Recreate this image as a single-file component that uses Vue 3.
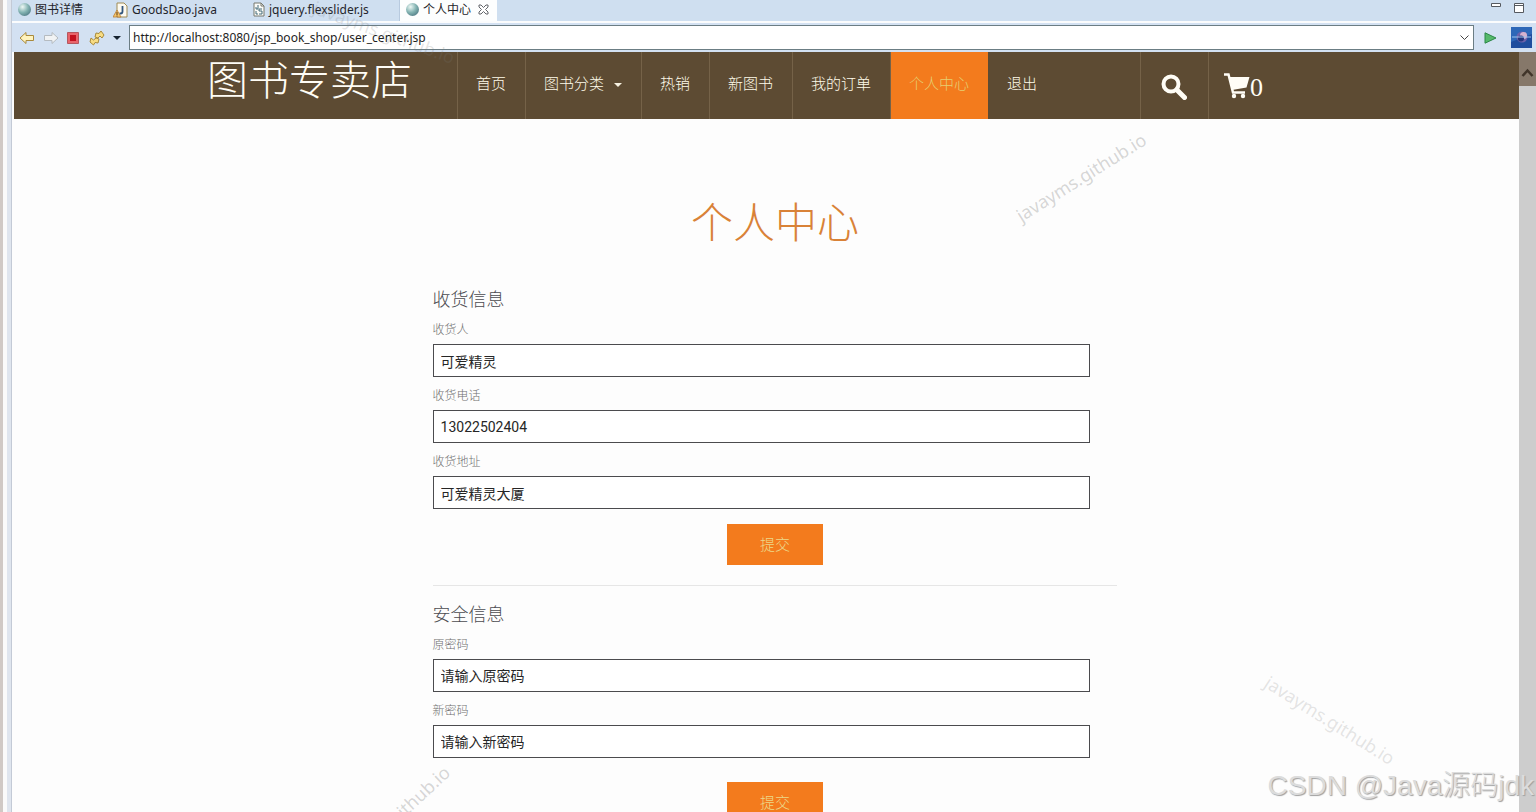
<template>
  <div class="workbench">
    <div class="gutter" aria-hidden="true"></div>

    <div class="editor">
      <nav class="tabs" aria-label="编辑器标签">
        <button
          v-for="tab in tabs"
          :key="tab.label"
          type="button"
          class="tab"
          :class="[tab.kind, { active: tab.label === activeTab }]"
          @click="activeTab = tab.label"
        >
          <span v-if="tab.icon === 'globe'" class="globe"></span>
          <svg v-else-if="tab.icon === 'java'" width="15" height="16" viewBox="0 0 15 16">
            <path d="M4 1h7l3 3v11H4z" fill="#fdfaf0" stroke="#a08b55" />
            <path d="M9.500 4v5.500q0 2-2 2H6.500" fill="none" stroke="#31557c" stroke-width="1.800" />
            <path d="M4 8l4 7H0z" fill="#f5c76b" stroke="#b97b35" stroke-width=".8" />
            <path d="M4 10v3M4 13.500v1" stroke="#5c3815" />
          </svg>
          <svg v-else width="12" height="15" viewBox="0 0 12 15">
            <path d="M1 1h7l3 3v10H1z" fill="#fbfbf7" stroke="#77796f" />
            <path d="M8 1v3h3" fill="none" stroke="#77796f" />
            <path d="M5 3v4H3V5M9 7H6v2h3v3H6M3 9v3h2" fill="none" stroke="#426b78" />
          </svg>
          <span>{{ tab.label }}</span>
          <svg v-if="tab.label === activeTab" class="close" width="11" height="11" viewBox="0 0 11 11">
            <path
              d="M1 1h2l2.500 2.500L8 1h2v2L7.500 5.500 10 8v2H8L5.500 7.500 3 10H1V8l2.500-2.500L1 3z"
              fill="#fff"
              stroke="#62656a"
            />
          </svg>
        </button>
        <div class="window-buttons">
          <button type="button" aria-label="最小化">
            <svg width="12" height="12" viewBox="0 0 12 12">
              <path d="M1.500 1.500h9v3h-9z" fill="#fff" stroke="#55595f" />
            </svg>
          </button>
          <button type="button" aria-label="最大化">
            <svg width="12" height="12" viewBox="0 0 12 12">
              <path d="M1.500 1.500h9v9h-9zM1 3.500h10" fill="#fff" stroke="#55595f" />
            </svg>
          </button>
        </div>
      </nav>

      <div class="toolbar">
        <button type="button" aria-label="后退">
          <svg width="16" height="14" viewBox="0 0 16 14">
            <path d="M1 7l6-5.500V4.500h7.500v5H7v3z" fill="#fff3bd" stroke="#a98a3c" stroke-linejoin="round" />
          </svg>
        </button>
        <button type="button" aria-label="前进">
          <svg width="16" height="14" viewBox="0 0 16 14">
            <path d="M15 7L9 1.500V4.500H1.500v5H9v3z" fill="#f1f3f4" stroke="#b5bbc0" stroke-linejoin="round" />
          </svg>
        </button>
        <button type="button" aria-label="停止">
          <svg width="12" height="12" viewBox="0 0 12 12">
            <path d="M.5.5h11v11H.5z" fill="#e9646b" stroke="#b5575f" />
            <path d="M3 3h6v6H3z" fill="#c3101e" />
          </svg>
        </button>
        <button type="button" class="refresh" aria-label="刷新">
          <svg width="16" height="16" viewBox="0 0 16 16">
            <path
              d="M6 7l1-4 3 .5L12 1l3 4-2 3-2-2-2 2z"
              fill="#f8dd83"
              stroke="#a98a3c"
              stroke-linejoin="round"
            />
            <path
              d="M10 9l-1 4-3-.5L4.500 15 1 12l1-4 2.500 2L7 8z"
              fill="#f8dd83"
              stroke="#a98a3c"
              stroke-linejoin="round"
            />
          </svg>
        </button>
        <button type="button" aria-label="更多">
          <svg width="8" height="4" viewBox="0 0 8 4"><path d="M0 0h8L4 4z" fill="#172331" /></svg>
        </button>
        <div class="address">
          <input v-model="url" type="text" aria-label="地址" />
          <button type="button" aria-label="历史地址">
            <svg width="9" height="6" viewBox="0 0 9 6">
              <path d="M.5.5l4 4 4-4" fill="none" stroke="#444" />
            </svg>
          </button>
        </div>
        <button type="button" class="go" aria-label="转到">
          <svg width="13" height="12" viewBox="0 0 13 12">
            <path d="M1 .800L12 6 1 11.200z" fill="#55b96b" stroke="#2b8747" />
          </svg>
        </button>
        <button type="button" aria-label="浏览器">
          <svg width="21" height="21" viewBox="0 0 21 21">
            <path d="M0 0h21v21H0z" fill="#1f4d9e" />
            <path d="M0 0h21v7L0 15z" fill="#2e68b8" />
            <circle cx="11" cy="10" r="5.500" fill="#6c62ac" />
            <circle cx="12.500" cy="8.500" r="3.500" fill="#d5b3cf" />
            <circle cx="10" cy="11.500" r="3" fill="#24357c" />
            <path d="M1 10h19" stroke="#9cc3ee" />
          </svg>
        </button>
      </div>

      <div class="page">
        <header class="site-header">
          <div class="container header-inner">
            <a class="brand" href="#">图书专卖店</a>
            <nav class="menu" aria-label="主导航">
              <a
                v-for="item in menu"
                :key="item.label"
                href="#"
                :class="{ current: item.current }"
              >{{ item.label }}<span v-if="item.dropdown" class="caret"></span></a>
            </nav>
            <a class="tool search" href="#" aria-label="搜索">
              <svg width="26" height="26" viewBox="0 0 26 26">
                <circle cx="10" cy="10" r="7.500" fill="none" stroke="#fffdf6" stroke-width="4" />
                <path d="M16 16l7.500 7.500" stroke="#fffdf6" stroke-width="5" stroke-linecap="round" />
              </svg>
            </a>
            <a class="tool cart" href="#" aria-label="购物车">
              <svg width="26" height="26" viewBox="0 0 26 26">
                <path d="M0 1.500h4.500L9 19.500h12" fill="none" stroke="#fffdf6" stroke-width="2.500" />
                <path d="M5 4h20.500l-3 10.500L8 17z" fill="#fffdf6" />
                <circle cx="10" cy="23" r="2.200" fill="#fffdf6" />
                <circle cx="19" cy="23" r="2.200" fill="#fffdf6" />
              </svg>
              <span>{{ cartCount }}</span>
            </a>
          </div>
        </header>

        <main class="account">
          <h1>个人中心</h1>
          <form v-for="group in groups" :key="group.title" :class="group.name" @submit.prevent>
            <h2>{{ group.title }}</h2>
            <div v-for="field in group.fields" :key="field.id" class="field">
              <label :for="field.id">{{ field.label }}</label>
              <input :id="field.id" v-model="field.value" type="text" :placeholder="field.placeholder" />
            </div>
            <button type="submit" class="submit">提交</button>
          </form>
        </main>

        <div class="scrollbar" aria-hidden="true">
          <div class="scroll-up">
            <svg width="13" height="10" viewBox="0 0 13 10">
              <path d="M1.500 8l5-5.500 5 5.500" fill="none" stroke="#41352a" stroke-width="2.500" />
            </svg>
          </div>
          <div class="scroll-thumb"></div>
        </div>
      </div>
    </div>

    <div class="marks" aria-hidden="true">
      <span class="mark mark-top">javayms.github.io</span>
      <span class="mark mark-right">javayms.github.io</span>
      <span class="mark mark-left">javayms.github.io</span>
      <span class="mark mark-bottom">javayms.github.io</span>
      <span class="credit">CSDN @Java源码jdk</span>
    </div>
  </div>
</template>

<script setup>
import { ref } from 'vue'

const tabs = [
  { label: '图书详情', icon: 'globe', kind: 'detail' },
  { label: 'GoodsDao.java', icon: 'java', kind: 'java' },
  { label: 'jquery.flexslider.js', icon: 'script', kind: 'script' },
  { label: '个人中心', icon: 'globe', kind: 'center' }
]

const activeTab = ref('个人中心')
const url = ref('http://localhost:8080/jsp_book_shop/user_center.jsp')
const cartCount = ref(0)

const menu = [
  { label: '首页' },
  { label: '图书分类', dropdown: true },
  { label: '热销' },
  { label: '新图书' },
  { label: '我的订单' },
  { label: '个人中心', current: true },
  { label: '退出' }
]

const groups = ref([
  {
    name: 'delivery',
    title: '收货信息',
    fields: [
      { id: 'receiver', label: '收货人', value: '可爱精灵' },
      { id: 'phone', label: '收货电话', value: '13022502404' },
      { id: 'address', label: '收货地址', value: '可爱精灵大厦' }
    ]
  },
  {
    name: 'security',
    title: '安全信息',
    fields: [
      { id: 'old-password', label: '原密码', value: '', placeholder: '请输入原密码' },
      { id: 'new-password', label: '新密码', value: '', placeholder: '请输入新密码' }
    ]
  }
])
</script>

<style>
body {
  margin: 0;
}
</style>

<style scoped>
.workbench,
.workbench * {
  box-sizing: border-box;
}

.workbench {
  position: relative;
  display: flex;
  height: 100vh;
  overflow: hidden;
  background: #fdfdfd;
  font-family: "Noto Sans", "Noto Sans CJK SC", sans-serif;
}

button {
  padding: 0;
  border: 0;
  background: none;
  font: inherit;
  cursor: pointer;
}

a {
  text-decoration: none;
}

svg {
  display: block;
  flex: none;
}

.gutter {
  flex: none;
  width: 12px;
  background: linear-gradient(90deg, #d0c9c5 0 3px, #fafafa 3px 7px, #dfe5ee 7px 11px, #c3cad6 11px);
}

.editor {
  flex: 1;
  min-width: 0;
  display: flex;
  flex-direction: column;
}

.tabs {
  flex: none;
  display: flex;
  height: 21px;
  background: #cfdff0;
  font-size: 12px;
  line-height: 18px;
}

.tab {
  display: flex;
  align-items: center;
  gap: 4px;
  padding: 0 6px 2px;
  color: #1f252b;
  white-space: nowrap;
}

.tab.detail {
  width: 95px;
}

.tab.java {
  width: 140px;
}

.tab.script {
  width: 152px;
}

.tab.center {
  width: 98px;
  border-left: 1px solid #b8cadf;
}

.tab.active {
  background: #fdfefe;
}

.globe {
  flex: none;
  width: 13px;
  height: 13px;
  border-radius: 50%;
  background: radial-gradient(circle at 35% 30%, #eef8f5, #83b3b2 45%, #37606f);
}

.close {
  margin-left: 3px;
}

.window-buttons {
  display: flex;
  gap: 11px;
  margin-left: auto;
  padding: 2px 11px 0 0;
  align-items: flex-start;
}

.toolbar {
  flex: none;
  display: flex;
  align-items: center;
  height: 31px;
  padding: 0 4px 0 7px;
  border-top: 2px solid #fbfcfd;
  background: #d3e1f2;
  gap: 8px;
}

.toolbar .refresh {
  margin-left: 2px;
}

.address {
  flex: 1;
  min-width: 0;
  display: flex;
  align-items: center;
  height: 25px;
  padding-right: 4px;
  border: 1px solid #6b7d84;
  background: #fff;
}

.address input {
  flex: 1;
  min-width: 0;
  height: 22px;
  padding: 0 3px;
  border: 0;
  outline: 0;
  background: none;
  color: #1d1d1d;
  font-family: inherit;
  font-size: 12px;
}

.toolbar .go {
  margin: 0 6px 0 2px;
}

.page {
  position: relative;
  flex: 1;
  min-height: 0;
  margin-left: 2px;
  overflow: hidden;
}

.container {
  width: 100%;
  max-width: 1170px;
  margin: 0 auto;
}

.site-header {
  background: #5d4b33;
}

.header-inner {
  display: flex;
  height: 67px;
  padding-left: 17px;
}

.brand {
  flex: none;
  width: 250px;
  color: #fffdf6;
  font-family: "Liberation Serif", "Noto Sans CJK SC", serif;
  font-size: 41px;
  font-weight: 300;
  line-height: 58px;
}

.menu {
  display: flex;
  flex: none;
  margin-right: 84px;
}

.menu a {
  display: flex;
  align-items: center;
  padding: 0 19px 6px 18px;
  border-left: 1px solid #756248;
  color: #fffbea;
  font-size: 15px;
  font-weight: 300;
}

.menu a.current {
  background: #f37b1d;
  color: #e6cf72;
}

.menu a:last-child {
  border-color: transparent;
}

.caret {
  margin: 4px 0 0 10px;
  border: 4px solid transparent;
  border-top-color: #f7f2e2;
  border-bottom: 0;
}

.tool {
  display: flex;
  align-items: center;
  border-left: 1px solid #756248;
  color: #fffdf6;
}

.search {
  width: 68px;
  padding: 2px 0 0 20px;
}

.cart {
  padding-left: 15px;
  font-family: "Liberation Serif", serif;
  font-size: 26px;
}

.cart span {
  padding-top: 5px;
}

.account {
  width: 45%;
  margin: 0 auto;
  padding-top: 73px;
}

h1 {
  margin: 0 0 35px;
  color: #d98237;
  font-size: 42px;
  font-weight: 300;
  line-height: 60px;
  text-align: center;
}

h2 {
  margin: 0;
  color: #4b4b50;
  font-size: 18px;
  font-weight: 300;
  line-height: 24px;
}

.field {
  padding-top: 9px;
}

.field label {
  display: block;
  margin-bottom: 4px;
  color: #707070;
  font-size: 12px;
  font-weight: 300;
  line-height: 20px;
}

.field input {
  display: block;
  width: 96%;
  height: 33px;
  padding: 0 7px;
  border: 1px solid #4b4b4e;
  border-radius: 0;
  outline: 0;
  background: #fff;
  color: #262626;
  font-family: Roboto, "Noto Sans CJK SC", sans-serif;
  font-size: 14px;
}

.field input::placeholder {
  color: #262626;
  opacity: 1;
}

.submit {
  display: block;
  width: 96px;
  height: 41px;
  margin: 15px auto 0;
  padding-bottom: 3px;
  background: #f37b1d;
  color: #ecd98a;
  font-size: 15px;
  font-weight: 300;
}

.delivery {
  padding-bottom: 20px;
  border-bottom: 1px solid #e6e6e6;
}

.security {
  padding-top: 16px;
}

.security .submit {
  margin-top: 24px;
}

.scrollbar {
  position: absolute;
  top: 0;
  right: 0;
  bottom: 0;
  width: 17px;
  display: flex;
  flex-direction: column;
}

.scroll-up {
  height: 34px;
  padding: 16px 0 0 2px;
  background: #86786a;
}

.scroll-thumb {
  flex: 1;
  background: #cdcdcd;
}

.marks {
  position: absolute;
  inset: 0;
  overflow: hidden;
  pointer-events: none;
}

.mark {
  position: absolute;
  color: rgba(120, 120, 120, 0.3);
  font-size: 18px;
  line-height: 24px;
  white-space: nowrap;
}

.mark-top {
  top: 32px;
  left: 384px;
  color: rgba(120, 120, 120, 0.2);
  transform: translate(-50%, -50%) rotate(20deg);
}

.mark-right {
  top: 177px;
  left: 1081px;
  transform: translate(-50%, -50%) rotate(-32deg);
}

.mark-left {
  top: 820px;
  left: 392px;
  transform: translate(-50%, -50%) rotate(-43deg);
}

.mark-bottom {
  top: 720px;
  left: 1330px;
  color: rgba(120, 120, 120, 0.2);
  transform: translate(-50%, -50%) rotate(32deg);
}

.credit {
  position: absolute;
  right: 2px;
  bottom: 8px;
  color: #dcdcdc;
  font-family: "Liberation Sans", "Noto Sans CJK SC", sans-serif;
  font-size: 28px;
  font-weight: 300;
  line-height: 36px;
  text-shadow: 1px 1px 1px #a0a0a0;
  white-space: nowrap;
}
</style>
